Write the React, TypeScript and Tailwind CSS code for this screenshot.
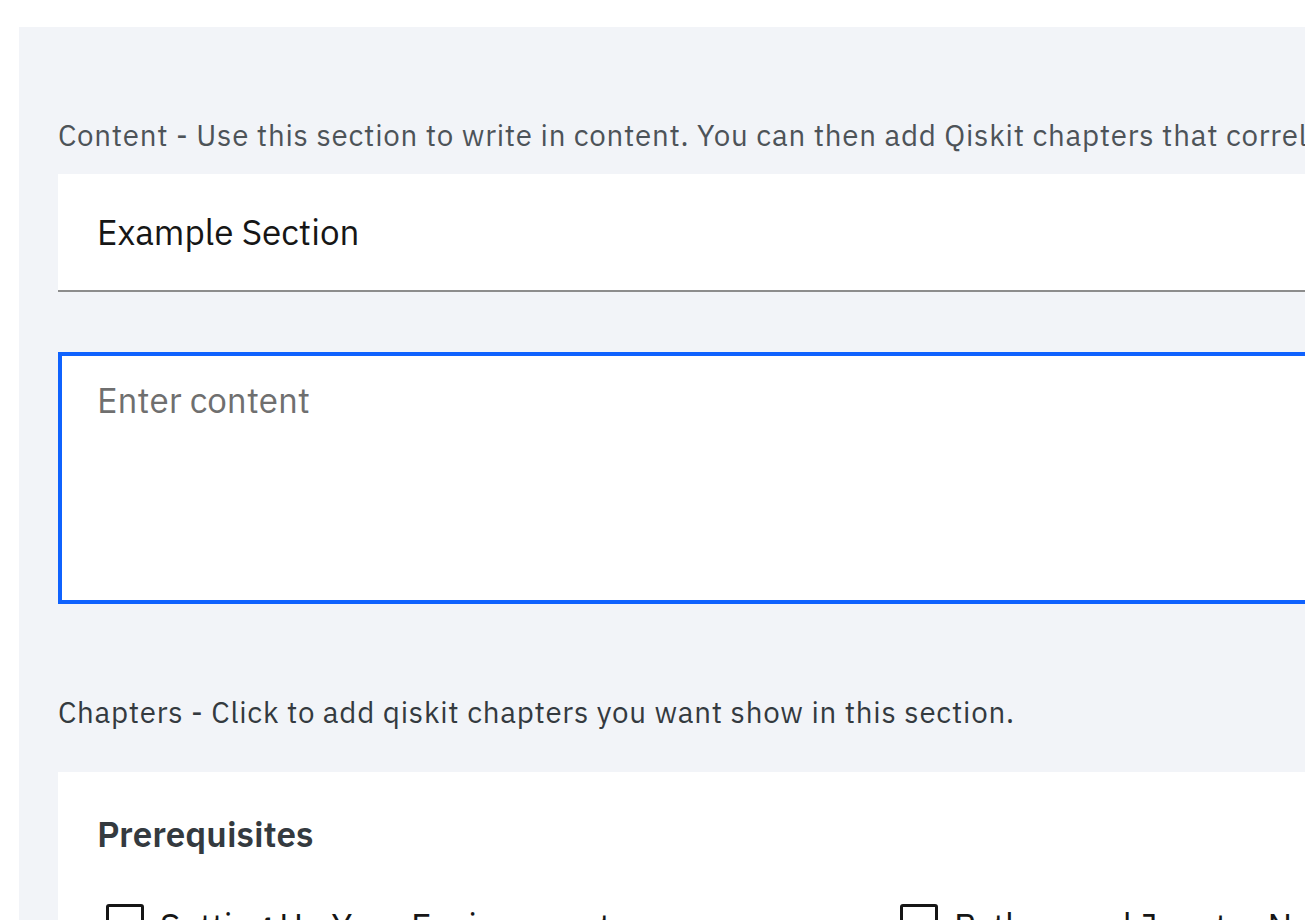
import React, { useState } from 'react';

const chapters = ['Setting Up Your Environment', 'Python and Jupyter Notebooks'];

export default function App() {
  const [title, setTitle] = useState('Example Section');
  const [content, setContent] = useState('');
  const [checked, setChecked] = useState<string[]>([]);

  const toggle = (c: string) =>
    setChecked(prev => (prev.includes(c) ? prev.filter(x => x !== c) : [...prev, c]));

  return (
    <div
      className="w-[1305px] h-[920px] overflow-hidden bg-white pt-[27px] pl-[19px]"
      style={{ fontFamily: '"IBM Plex Sans", Roboto, "Noto Sans", sans-serif' }}
    >
      <div className="w-[1500px] min-h-[1000px] bg-[#f2f4f8] pl-[39px] pt-[86px]">
        <label className="block whitespace-nowrap text-[29.5px] leading-[44px] tracking-[0.75px] text-[#4d5358] mb-[17px]">
          Content - Use this section to write in content. You can then add Qiskit chapters that correlate to this section.
        </label>
        <input
          value={title}
          onChange={e => setTitle(e.target.value)}
          className="block w-[1400px] h-[118px] bg-white border-b-2 border-[#8d8d8d] px-[39px] text-[35px] text-[#161616] outline-none"
        />

        <textarea
          value={content}
          onChange={e => setContent(e.target.value)}
          placeholder="Enter content"
          className="block mt-[60px] w-[1400px] h-[252px] bg-white border-[4px] border-[#0f62fe] px-[35px] pt-[20px] text-[35px] leading-[48px] text-[#161616] placeholder:text-[#6f6f6f] outline-none resize-none"
        />

        <label className="block whitespace-nowrap mt-[86px] text-[29.5px] leading-[44px] tracking-[0.75px] text-[#343a3f]">
          Chapters - Click to add qiskit chapters you want show in this section.
        </label>

        <div className="mt-[38px] w-[1500px] bg-white pl-[39px] pt-[38px]">
          <h3 className="text-[35px] leading-[48px] font-semibold text-[#343a3f]">Prerequisites</h3>
          <div className="mt-[46px] grid grid-cols-[794px_794px]">
            {chapters.map(c => (
              <label key={c} className="flex items-start gap-[16px] pl-[9px] cursor-pointer">
                <span
                  onClick={() => toggle(c)}
                  className={`w-[38px] h-[38px] shrink-0 rounded-[3px] border-[3px] border-[#161616] ${
                    checked.includes(c) ? 'bg-[#161616]' : 'bg-white'
                  }`}
                />
                <span className="text-[35px] leading-[44px] text-[#161616] whitespace-nowrap">{c}</span>
              </label>
            ))}
          </div>
        </div>
      </div>
    </div>
  );
}
